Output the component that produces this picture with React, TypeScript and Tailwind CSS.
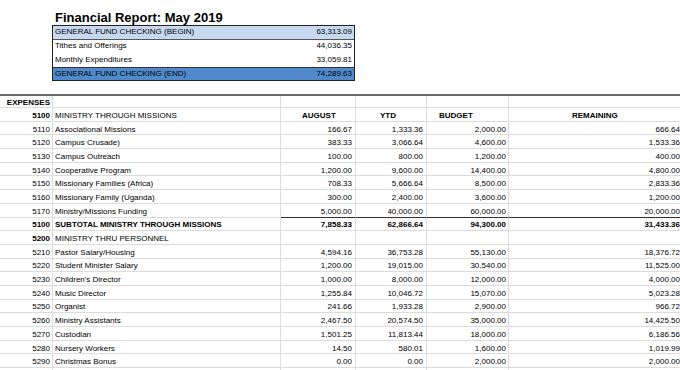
import React from "react";

interface Row {
  code: string;
  label: string;
  august?: string;
  ytd?: string;
  budget?: string;
  remaining?: string;
  codeBold?: boolean;
  bold?: boolean;
  header?: boolean;
  lineBelow?: boolean;
}

const rows: Row[] = [
  { code: "5100", label: "MINISTRY THROUGH MISSIONS", codeBold: true, header: true },
  { code: "5110", label: "Associational Missions", august: "166.67", ytd: "1,333.36", budget: "2,000.00", remaining: "666.64" },
  { code: "5120", label: "Campus Crusade)", august: "383.33", ytd: "3,066.64", budget: "4,600.00", remaining: "1,533.36" },
  { code: "5130", label: "Campus Outreach", august: "100.00", ytd: "800.00", budget: "1,200.00", remaining: "400.00" },
  { code: "5140", label: "Cooperative Program", august: "1,200.00", ytd: "9,600.00", budget: "14,400.00", remaining: "4,800.00" },
  { code: "5150", label: "Missionary Families (Africa)", august: "708.33", ytd: "5,666.64", budget: "8,500.00", remaining: "2,833.36" },
  { code: "5160", label: "Missionary Family (Uganda)", august: "300.00", ytd: "2,400.00", budget: "3,600.00", remaining: "1,200.00" },
  { code: "5170", label: "Ministry/Missions Funding", august: "5,000.00", ytd: "40,000.00", budget: "60,000.00", remaining: "20,000.00", lineBelow: true },
  { code: "5100", label: "SUBTOTAL MINISTRY THROUGH MISSIONS", august: "7,858.33", ytd: "62,866.64", budget: "94,300.00", remaining: "31,433.36", bold: true },
  { code: "5200", label: "MINISTRY THRU PERSONNEL", codeBold: true },
  { code: "5210", label: "Pastor Salary/Housing", august: "4,594.16", ytd: "36,753.28", budget: "55,130.00", remaining: "18,376.72" },
  { code: "5220", label: "Student Minister Salary", august: "1,200.00", ytd: "19,015.00", budget: "30,540.00", remaining: "11,525.00" },
  { code: "5230", label: "Children's Director", august: "1,000.00", ytd: "8,000.00", budget: "12,000.00", remaining: "4,000.00" },
  { code: "5240", label: "Music Director", august: "1,255.84", ytd: "10,046.72", budget: "15,070.00", remaining: "5,023.28" },
  { code: "5250", label: "Organist", august: "241.66", ytd: "1,933.28", budget: "2,900.00", remaining: "966.72" },
  { code: "5260", label: "Ministry Assistants", august: "2,467.50", ytd: "20,574.50", budget: "35,000.00", remaining: "14,425.50" },
  { code: "5270", label: "Custodian", august: "1,501.25", ytd: "11,813.44", budget: "18,000.00", remaining: "6,186.56" },
  { code: "5280", label: "Nursery Workers", august: "14.50", ytd: "580.01", budget: "1,600.00", remaining: "1,019.99" },
  { code: "5290", label: "Christmas Bonus", august: "0.00", ytd: "0.00", budget: "2,000.00", remaining: "2,000.00" },
  { code: "", label: "" },
];

// spreadsheet cell: light grid on right and bottom, text sits a little below centre
const cell = "flex items-center h-full pt-[3px] border-r border-b border-[#dcdcdc] whitespace-nowrap overflow-hidden";

export default function App() {
  return (
    <div className="w-[680px] h-[370px] overflow-hidden bg-white text-black font-['Liberation_Sans',Arial,sans-serif] text-[8px]">
      {/* Title + summary */}
      <div className="pt-[10px] pl-[52px] h-[94px]">
        <h1 className="pl-[3px] text-[13px] leading-[15px] font-bold text-black">Financial Report: May 2019</h1>
        <div className="w-[303px] border border-[#222]">
          <div className="flex justify-between items-center h-[13.5px] px-[2px] bg-[#c6d9f1] border-b border-[#555]">
            <span>GENERAL FUND CHECKING (BEGIN)</span>
            <span>63,313.09</span>
          </div>
          <div className="flex justify-between items-center h-[13.5px] px-[2px]">
            <span>Tithes and Offerings</span>
            <span>44,036.35</span>
          </div>
          <div className="flex justify-between items-center h-[13.5px] px-[2px]">
            <span>Monthly Expenditures</span>
            <span>33,059.81</span>
          </div>
          <div className="flex justify-between items-center h-[13px] px-[2px] bg-[#5089cc] border-t border-[#333]">
            <span>GENERAL FUND CHECKING (END)</span>
            <span>74,289.63</span>
          </div>
        </div>
      </div>

      {/* Expenses table */}
      <div className="border-t-2 border-[#6a6a6a] w-[683px]">
        <div className="flex h-[12px]">
          <div className={`${cell} w-[53px] justify-end pr-[2px] font-bold`}>EXPENSES</div>
          <div className={`${cell} w-[228px]`} />
          <div className={`${cell} w-[75px]`} />
          <div className={`${cell} w-[71px]`} />
          <div className={`${cell} w-[82px]`} />
          <div className={`${cell} w-[174px] border-r-0`} />
        </div>
        {rows.map((r, i) => {
          const below = r.lineBelow ? "border-b-[#333]" : "";
          return (
            <div key={i} className={`flex h-[13.7px] ${r.bold ? "font-bold" : ""}`}>
              <div className={`${cell} w-[53px] justify-end pr-[2px] ${r.codeBold ? "font-bold" : ""}`}>{r.code}</div>
              <div className={`${cell} w-[228px] pl-[2px]`}>{r.label}</div>
              {r.header ? (
                <>
                  <div className={`${cell} w-[75px] pl-[21px] font-bold`}>AUGUST</div>
                  <div className={`${cell} w-[71px] pl-[24px] font-bold`}>YTD</div>
                  <div className={`${cell} w-[82px] pl-[12px] font-bold`}>BUDGET</div>
                  <div className={`${cell} w-[174px] pl-[63px] font-bold border-r-0`}>REMAINING</div>
                </>
              ) : (
                <>
                  <div className={`${cell} ${below} w-[75px] justify-end pr-[3px]`}>{r.august}</div>
                  <div className={`${cell} ${below} w-[71px] justify-end pr-[3px]`}>{r.ytd}</div>
                  <div className={`${cell} ${below} w-[82px] justify-end pr-[2px]`}>{r.budget}</div>
                  <div className={`${cell} ${below} w-[174px] justify-end pr-[3px] border-r-0`}>{r.remaining}</div>
                </>
              )}
            </div>
          );
        })}
      </div>
    </div>
  );
}
